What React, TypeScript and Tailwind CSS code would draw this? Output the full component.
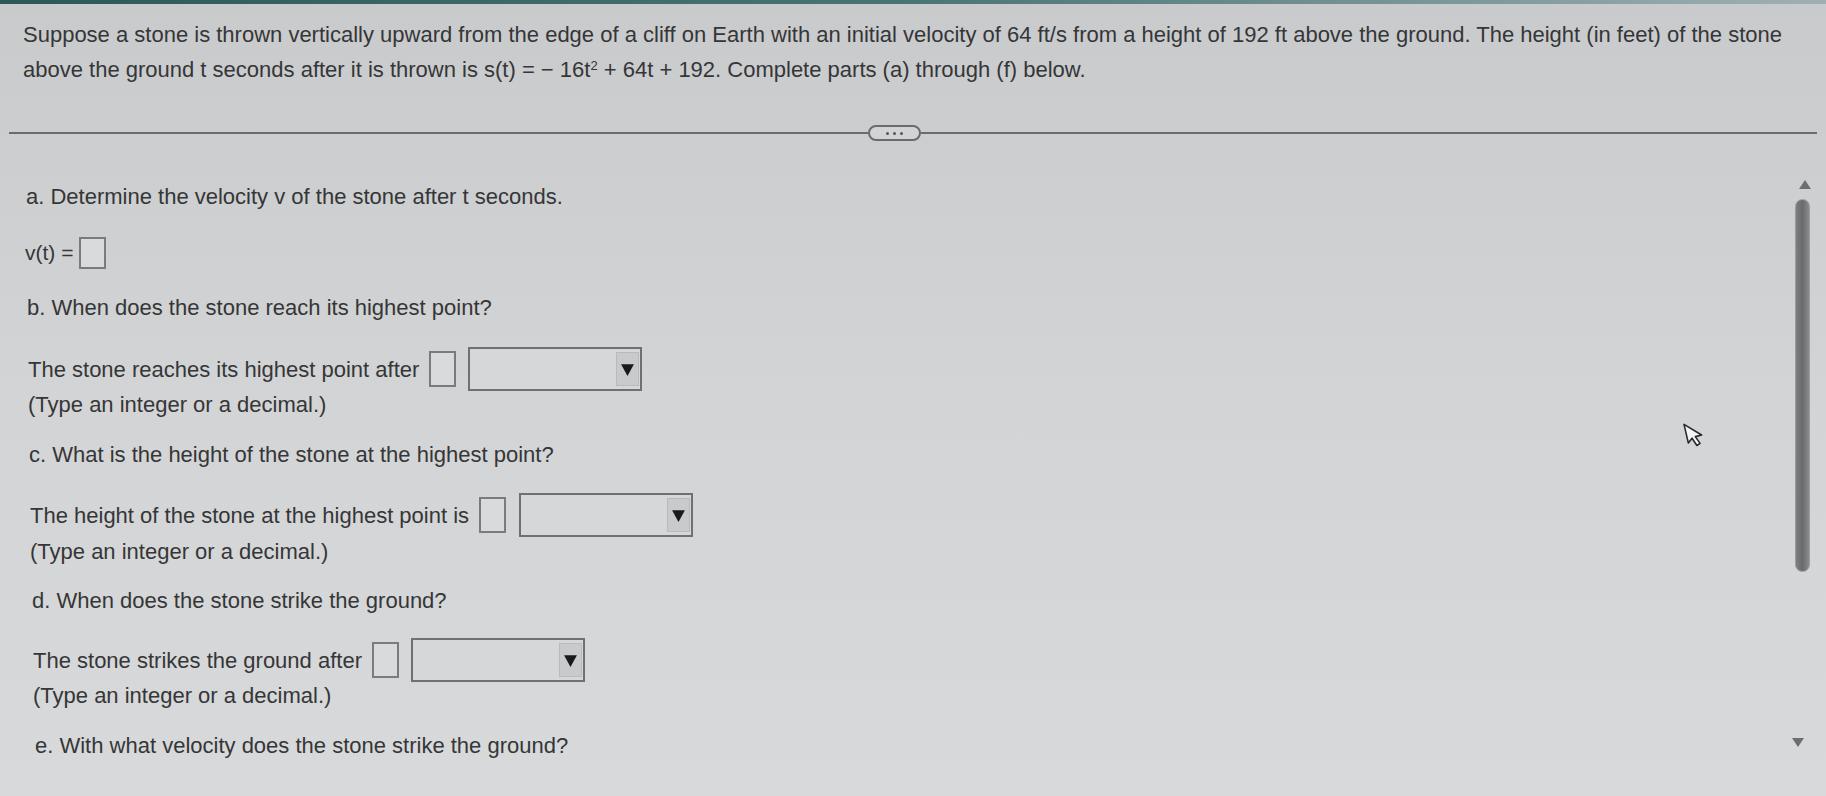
import React from "react";

function SmallBox({ h = "h-[36px]" }: { h?: string }) {
  return <div className={`w-[27px] ${h} border-2 border-[#7a7b7d] bg-[#d9dadb] shrink-0`} />;
}

function Dropdown() {
  return (
    <div className="w-[174px] h-[44px] border-2 border-[#6f7072] bg-[#d6d7d8] flex items-center justify-end pr-[1px] shrink-0">
      <div className="w-[23px] h-[34px] border border-[#b9babc] bg-[#c9cacc] flex items-center justify-center">
        <svg width="15" height="15" viewBox="0 0 14 14">
          <polygon points="1,2 13,2 7,13" fill="#1a1a1a" />
        </svg>
      </div>
    </div>
  );
}

export default function App() {
  return (
    <div
      className="w-[1826px] h-[796px] overflow-hidden relative bg-linear-to-b from-[#c9cacc] via-[#d3d4d5] to-[#d8d9da] text-[#353637]"
      style={{ fontFamily: '"Liberation Sans", Arial, sans-serif' }}
    >
      <div className="h-[4px] bg-linear-to-r from-[#2c5858] via-[#4a7576] to-[#9fb0b2]" />
      <p className="pl-[23px] pr-[14px] pt-[13px] text-[22px] leading-[35px]">
        Suppose a stone is thrown vertically upward from the edge of a cliff on Earth with an initial velocity of 64 ft/s from a height of 192 ft above the ground. The height (in feet) of the stone above the ground t seconds after it is thrown is s(t) = − 16t<span className="relative -top-[7px] text-[13px] leading-none">2</span> + 64t + 192. Complete parts (a) through (f) below.
      </p>
      <div className="mt-[38px] mx-[9px] flex items-center h-[16px]">
        <div className="w-[859px] h-[2px] bg-[#6a6b6d]" />
        <div className="w-[53px] h-[16px] rounded-full border-2 border-[#6a6b6d] bg-[#d2d3d4] flex items-center justify-center gap-[4px]">
          <span className="w-[3px] h-[3px] bg-[#555] rounded-full" />
          <span className="w-[3px] h-[3px] bg-[#555] rounded-full" />
          <span className="w-[3px] h-[3px] bg-[#555] rounded-full" />
        </div>
        <div className="flex-1 h-[2px] bg-[#6a6b6d]" />
      </div>
      <div className="flex">
        <div className="flex-1 flex flex-col text-[22px]">
          <div className="mt-[41px] pl-[26px] leading-[30px]">a. Determine the velocity v of the stone after t seconds.</div>
          <div className="mt-[25px] pl-[25px] flex items-center gap-[6px] h-[32px]">
            <span className="text-[21px]">v(t) =</span>
            <SmallBox h="h-[32px]" />
          </div>
          <div className="mt-[24px] pl-[27px] leading-[30px]">b. When does the stone reach its highest point?</div>
          <div className="mt-[24px] pl-[28px] flex items-center h-[44px]">
            <span>The stone reaches its highest point after</span>
            <div className="ml-[10px] mr-[12px]"><SmallBox /></div>
            <Dropdown />
          </div>
          <div className="pl-[28px] leading-[28px]">(Type an integer or a decimal.)</div>
          <div className="mt-[21px] pl-[29px] leading-[30px]">c. What is the height of the stone at the highest point?</div>
          <div className="mt-[23px] pl-[30px] flex items-center h-[44px]">
            <span>The height of the stone at the highest point is</span>
            <div className="ml-[10px] mr-[13px]"><SmallBox /></div>
            <Dropdown />
          </div>
          <div className="mt-[1px] pl-[30px] leading-[28px]">(Type an integer or a decimal.)</div>
          <div className="mt-[20px] pl-[32px] leading-[30px]">d. When does the stone strike the ground?</div>
          <div className="mt-[22px] pl-[33px] flex items-center h-[44px]">
            <span>The stone strikes the ground after</span>
            <div className="ml-[10px] mr-[12px]"><SmallBox /></div>
            <Dropdown />
          </div>
          <div className="pl-[33px] leading-[28px]">(Type an integer or a decimal.)</div>
          <div className="mt-[21px] pl-[35px] leading-[30px]">e. With what velocity does the stone strike the ground?</div>
        </div>
        <div className="w-[44px] flex flex-col items-center pr-[4px]">
          <svg className="mt-[39px] ml-[6px]" width="12" height="9" viewBox="0 0 12 9">
            <polygon points="6,0 12,9 0,9" fill="#6d6e70" />
          </svg>
          <div className="mt-[10px] w-[15px] h-[373px] rounded-full bg-linear-to-r from-[#7d7e80] via-[#6a6b6d] to-[#8a8b8d] border border-[#9a9b9d]" />
          <svg className="mt-[166px] -ml-[8px]" width="12" height="9" viewBox="0 0 12 9">
            <polygon points="0,0 12,0 6,9" fill="#6d6e70" />
          </svg>
        </div>
      </div>
      <svg className="absolute left-[1683px] top-[421px]" width="24" height="28" viewBox="0 0 24 28">
        <path d="M3 2 L4 21 L8.5 17 L12 25 L15.5 23.5 L12 16 L18.5 15.5 Z" fill="#f4f4f4" stroke="#2a2a2a" strokeWidth="1.6" strokeLinejoin="round" transform="rotate(-10 10 14)" />
      </svg>
    </div>
  );
}
